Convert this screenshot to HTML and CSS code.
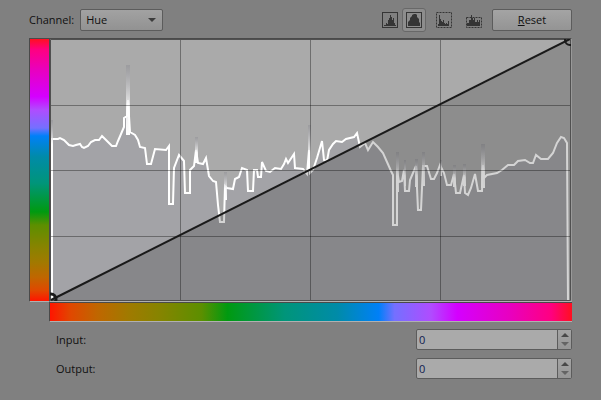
FILE: index.html
```
<!DOCTYPE html>
<html lang="en">
<head>
    <meta charset="UTF-8">
    <title>Curves</title>
    <link rel="stylesheet" href="styles.css">
</head>
<body>
<div class="curves">
    <div class="toolbar">
        <label for="channel">Channel:</label>
        <div class="select-box">
            <select id="channel">
                <option>Hue</option>
            </select>
        </div>
        <div class="tools">
            <button class="tool" type="button" aria-label="Linear histogram">
                <svg width="16" height="16" viewBox="0 0 16 16">
                    <rect class="frame" x="0.5" y="0.5" width="15" height="15"/>
                    <path class="solid" d="M2 14V13H4V11H5V12H6V8H7V6H8V3H9V5H10V8H11V6H12V11H13V13H14V14Z"/>
                </svg>
            </button>
            <button class="tool active" type="button" aria-label="Logarithmic histogram">
                <svg width="16" height="16" viewBox="0 0 16 16">
                    <rect class="frame" x="0.5" y="0.5" width="15" height="15"/>
                    <path class="solid" d="M2 14V10L4 8V6L6 4V3L8 2H10L11 3V5L13 7V10L14 11V14Z"/>
                </svg>
            </button>
        </div>
        <div class="tools views">
            <button class="tool" type="button" aria-label="Show original data">
                <svg width="16" height="16" viewBox="0 0 16 16">
                    <rect class="frame dashed" x="0.5" y="0.5" width="15" height="15"/>
                    <path class="solid" d="M2 14V12H3V3H4V7H5V9H6V10H7V8H8V11H9V12H10V11H11V12H12V9H13V14Z"/>
                </svg>
            </button>
            <button class="tool" type="button" aria-label="Fit to histogram">
                <svg width="16" height="16" viewBox="0 0 16 16">
                    <rect class="frame dashed" x="0.5" y="5.5" width="15" height="10"/>
                    <path class="solid" d="M1 14V11H3V8H5V3H6V6H7V8H8V6H9V10H11V8H12V10H13V8H14V14Z"/>
                </svg>
            </button>
        </div>
        <button class="reset" type="button"><u>R</u>eset</button>
    </div>

    <div class="graph">
        <div class="hue-y"></div>
        <svg class="plot" viewBox="50 39 521 262" preserveAspectRatio="none">
            <defs>
                <linearGradient id="spike" x1="0" y1="0" x2="0" y2="1">
                    <stop offset="0" stop-color="#8e8e94" stop-opacity="0.5"/>
                    <stop offset="0.6" stop-color="#fff" stop-opacity="0.8"/>
                    <stop offset="1" stop-color="#fff"/>
                </linearGradient>
            </defs>
            <!-- histogram -->
            <path class="hist" d="M52 301V139L58 139L60 138L64 140L69 145L73 146L76 145L80 144L82 147L84 148L88 146L91 142L95 140L99 140L102 136L105 139L109 143L112 146L116 146L118 141L121 134L124 127L124 118L127 116L128 100L130 132L135 135L138 140L140 147L145 148L147 164L151 164L155 149L166 150L169 146L169 204L173 204L174 168L179 155L184 161L185 193L190 193L190 170L194 166L196 150L198 163L203 164L206 158L209 176L213 181L216 182L218 205L220 222L224 222L225 186L227 188L233 189L235 179L239 177L242 168L247 170L248 191L253 191L254 170L257 170L258 177L261 177L262 162L266 171L270 172L275 168L281 169L284 164L286 159L288 163L294 154L295 168L303 169L307 174L309 150L310 173L313 170L317 158L322 141L324 160L327 161L329 150L333 144L336 141L342 142L346 139L354 137L357 133L360 147L365 143L368 150L373 142L378 147L383 153L387 162L391 171L393 175L393 225L397 225L397 170L399 182L402 181L404 170L405 191L409 191L410 180L413 173L416 166L418 210L421 210L423 166L427 166L431 179L434 179L437 173L440 165L444 173L447 185L451 185L454 174L456 193L460 193L464 175L465 193L468 195L471 188L475 174L478 191L482 191L483 165L484 178L487 175L497 173L502 170L508 165L514 165L518 161L525 160L530 163L533 163L536 155L541 159L548 159L553 153L557 143L561 137L564 138L567 143L568 301"/>
            <g fill="url(#spike)">
                <rect x="51" y="120" width="2" height="40"/>
                <rect x="126" y="65" width="4" height="70"/>
                <rect x="195" y="137" width="3" height="26"/>
                <rect x="224" y="172" width="3" height="28"/>
                <rect x="308" y="125" width="3" height="46"/>
                <rect x="396" y="152" width="3" height="40"/>
                <rect x="404" y="160" width="2" height="26"/>
                <rect x="415" y="159" width="3" height="28"/>
                <rect x="422" y="152" width="3" height="34"/>
                <rect x="440" y="160" width="2" height="16"/>
                <rect x="453" y="165" width="3" height="22"/>
                <rect x="463" y="164" width="3" height="22"/>
                <rect x="481" y="144" width="4" height="44"/>
            </g>
            <path class="shade" d="M51 300L570 40V301H51Z"/>
            <path class="grid" d="M180.5 39V301M310.5 39V301M440.5 39V301M50 105.5H571M50 170.5H571M50 236.5H571"/>
            <path class="edge" d="M50.5 301V39.5H570.5V300.5H50"/>
            <path class="curve" d="M51 300L570 39"/>
            <circle class="knob" cx="51" cy="299" r="5"/>
            <circle class="knob end" cx="570" cy="40" r="5"/>
        </svg>
        <div class="hue-x"></div>
    </div>

    <div class="fields">
        <div class="field">
            <label for="input">Input:</label>
            <div class="spin">
                <input id="input" type="text" value="0">
                <div class="steps">
                    <button class="up" type="button" aria-label="Increase input"></button>
                    <button class="down" type="button" aria-label="Decrease input"></button>
                </div>
            </div>
        </div>
        <div class="field">
            <label for="output">Output:</label>
            <div class="spin">
                <input id="output" type="text" value="0">
                <div class="steps">
                    <button class="up" type="button" aria-label="Increase output"></button>
                    <button class="down" type="button" aria-label="Decrease output"></button>
                </div>
            </div>
        </div>
    </div>
</div>
</body>
</html>
```
FILE: styles.css
```
* {
    box-sizing: border-box;
}

body {
    margin: 0;
    background: #808080;
    color: #101010;
    font: 11px/16px "Open Sans", "Noto Sans", sans-serif;
}

button, select, input {
    margin: 0;
    padding: 0;
    border: none;
    background: none;
    color: inherit;
    font: inherit;
}

.curves {
    padding: 9px 29px;
}

.toolbar {
    display: flex;
    align-items: center;
    height: 22px;
    margin-bottom: 7px;
}

/* channel drop-down */
.select-box {
    position: relative;
    width: 83px;
    margin-left: 6px;
}

.select-box select {
    display: block;
    width: 100%;
    height: 22px;
    padding: 0 5px;
    border: 1px solid #5c5c5c;
    border-radius: 2px;
    background: linear-gradient(#a2a2a2, #929292);
    appearance: none;
}

.select-box::after {
    content: "";
    position: absolute;
    top: 9px;
    right: 7px;
    border: 4px solid transparent;
    border-top-color: #3c3c3c;
    border-bottom: none;
    pointer-events: none;
}

.tools {
    display: flex;
    margin-left: auto;
}

.views {
    gap: 6px;
    margin-left: 6px;
}

.tool {
    display: flex;
    align-items: center;
    justify-content: center;
    width: 24px;
    height: 24px;
    border: 1px solid transparent;
    border-radius: 3px;
}

.tool.active {
    border-color: #686868;
    background: #8d8d8d;
}

.frame {
    fill: none;
    stroke: #353535;
}

.dashed {
    stroke-dasharray: 2 1;
}

.solid {
    fill: #353535;
}

.reset {
    width: 80px;
    height: 22px;
    margin-left: 6px;
    border: 1px solid #5c5c5c;
    border-radius: 2px;
    background: linear-gradient(#a4a4a4, #949494);
}

/* graph and hue bars */
.graph {
    display: grid;
    grid-template-columns: 20px 1fr;
    grid-template-rows: 264px 20px;
}

.hue-y,
.hue-x {
    --hues: #ff1500, #e04800 4%, #c06600 9%, #a07a00 15%, #868400 21%, #5c8f00 29%, #009a10 34%, #00957a 45%, #008ba8 55%, #0080f8 63%, #7470ff 66%, #b04cff 73%, #d400ff 78%, #e800c0 88%, #ff0080 96%, #ff1020;
    border: 1px solid #4a4a4a;
    border-right: none;
    border-bottom-color: #b0b0b0;
}

.hue-y {
    background: linear-gradient(to top, var(--hues));
}

.hue-x {
    grid-column: 2;
    background: linear-gradient(to right, var(--hues));
}

.plot {
    display: block;
    width: 100%;
    height: 100%;
    border: 1px solid #4a4a4a;
    border-right-color: #999;
    border-bottom-color: #b0b0b0;
    background: #aaaaaa;
}

.hist {
    fill: #a3a3a7;
    stroke: #ffffff;
    stroke-width: 2;
}

.shade {
    fill: rgba(0, 0, 0, 0.17);
}

.grid {
    fill: none;
    stroke: rgba(0, 0, 0, 0.35);
}

.edge {
    fill: none;
    stroke: #505050;
}

.curve {
    fill: none;
    stroke: #1a1a1a;
    stroke-width: 2;
}

.knob {
    fill: none;
    stroke: #1a1a1a;
    stroke-width: 3;
}

.knob.end {
    stroke-width: 2;
}

/* input / output values */
.fields {
    display: flex;
    flex-direction: column;
    gap: 8px;
    padding: 7px 0 0 27px;
}

.field {
    display: flex;
    align-items: center;
    justify-content: space-between;
}

.spin {
    display: flex;
    width: 156px;
    height: 21px;
    border: 1px solid #5c5c5c;
    border-radius: 2px;
    background: #aaaaaa;
}

.spin input {
    flex: 1;
    min-width: 0;
    padding: 0 2px;
    color: #102050;
}

.steps {
    display: flex;
    flex-direction: column;
    width: 14px;
    border-left: 1px solid #5c5c5c;
    background: linear-gradient(#a4a4a4, #969696);
}

.steps button {
    display: flex;
    flex: 1;
    align-items: center;
    justify-content: center;
}

.steps button::before {
    content: "";
    border: 4px solid transparent;
}

.steps .up::before {
    border-top: none;
    border-bottom-color: #484848;
}

.steps .down::before {
    border-bottom: none;
    border-top-color: #646464;
}
```
